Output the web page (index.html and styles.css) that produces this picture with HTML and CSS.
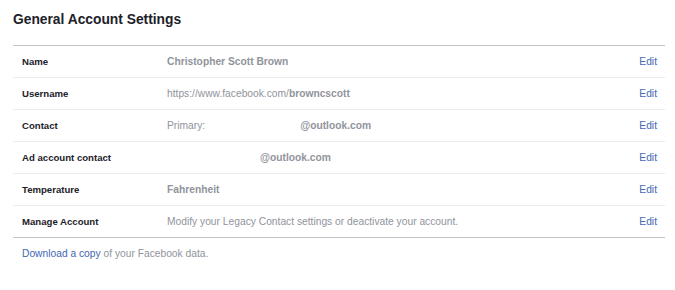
FILE: index.html
```html
<!DOCTYPE html>
<html>
<head>
<meta charset="utf-8">
<link rel="stylesheet" href="styles.css">
</head>
<body>
<div class="page">
  <h2 class="title">General Account Settings</h2>
  <ul class="settings">
    <li class="row">
      <span class="label">Name</span>
      <span class="value"><b>Christopher Scott Brown</b></span>
      <a class="edit">Edit</a>
    </li>
    <li class="row">
      <span class="label">Username</span>
      <span class="value">https://www.facebook.com/<b>browncscott</b></span>
      <a class="edit">Edit</a>
    </li>
    <li class="row">
      <span class="label">Contact</span>
      <span class="value">Primary:<span class="gap1"></span><b>@outlook.com</b></span>
      <a class="edit">Edit</a>
    </li>
    <li class="row">
      <span class="label">Ad account contact</span>
      <span class="value"><span class="gap2"></span><b>@outlook.com</b></span>
      <a class="edit">Edit</a>
    </li>
    <li class="row">
      <span class="label">Temperature</span>
      <span class="value"><b>Fahrenheit</b></span>
      <a class="edit">Edit</a>
    </li>
    <li class="row">
      <span class="label">Manage Account</span>
      <span class="value">Modify your Legacy Contact settings or deactivate your account.</span>
      <a class="edit">Edit</a>
    </li>
  </ul>
  <p class="footer"><a class="link">Download a copy</a> of your Facebook data.</p>
</div>
</body>
</html>
```
FILE: styles.css
```css
html, body {
  margin: 0;
  padding: 0;
  background: #fff;
}
body {
  font-family: "Liberation Sans", Arial, sans-serif;
  font-size: 10.25px;
  color: #1d2129;
}
.page {
  width: 652px;
  padding: 11px 0 0 13px;
}
.title {
  margin: 0;
  font-size: 13.8px;
  font-weight: bold;
  line-height: 18px;
  color: #1d2129;
  padding-bottom: 16px;
}
.settings {
  list-style: none;
  margin: 0;
  padding: 0;
  border-top: 1px solid #c4c4c4;
  border-bottom: 1px solid #c4c4c4;
}
.row {
  display: flex;
  align-items: center;
  height: 31px;
  padding: 0 8px 0 9px;
  border-top: 1px solid #e9ebee;
}
.row:first-child {
  border-top: none;
}
.label {
  width: 145px;
  flex: none;
  font-size: 9.6px;
  font-weight: bold;
  color: #1d2129;
}
.value {
  flex: 1;
  color: #90949c;
}
.value b {
  color: #90949c;
  font-weight: bold;
}
.gap1 {
  display: inline-block;
  width: 95px;
}
.gap2 {
  display: inline-block;
  width: 93px;
}
.edit {
  color: #4267b2;
  text-decoration: none;
}
.footer {
  margin: 0;
  padding: 8px 0 0 9px;
  color: #90949c;
  line-height: 16px;
}
.link {
  color: #4267b2;
}
```
